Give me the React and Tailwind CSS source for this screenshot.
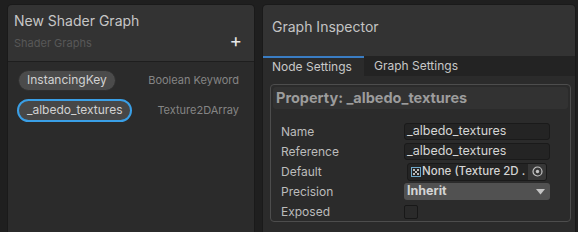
import React from 'react';

const font = { fontFamily: 'Inter, "Noto Sans", sans-serif' };

function Pill({ label, type, selected }) {
  return (
    <div className="flex items-center justify-between h-[24px] pr-[15px]">
      <div
        className={
          selected
            ? 'h-[23px] px-[8px] flex items-center rounded-full bg-[#474747] border-2 border-[#3a9fe6] text-[12px] text-[#d2d2d2]'
            : 'h-[21px] ml-[1px] px-[8px] flex items-center rounded-full bg-[#4b4b4b] border border-[#2f2f2f] text-[12px] text-[#d2d2d2]'
        }
      >
        {label}
      </div>
      <span className="text-[11px] text-[#858585]">{type}</span>
    </div>
  );
}

function Row({ label, children }) {
  return (
    <div className="flex items-center h-[20px]">
      <span className="w-[131px] pl-[8px] text-[12px] text-[#bcbcbc]">{label}</span>
      {children}
    </div>
  );
}

export default function App() {
  return (
    <div style={font} className="w-[578px] h-[232px] bg-[#1f1f1f] flex pt-[4px] pl-[7px] gap-[7px] overflow-hidden">
      {/* Left: blackboard */}
      <div className="w-[248px] flex flex-col rounded-t-[5px] overflow-hidden border-x border-t border-[#1a1a1a]">
        <div className="h-[57px] bg-[#333333] border-b border-[#1e1e1e] flex flex-col px-[6px] pt-[5px]">
          <span className="text-[14px] text-[#c6c6c6] leading-[22px]">New Shader Graph</span>
          <div className="flex items-center justify-between mt-[3px]">
            <span className="text-[11px] text-[#585858]">Shader Graphs</span>
            <span className="text-[19px] leading-none text-[#e6e6e6] mr-[6px] -mt-[5px]">+</span>
          </div>
        </div>
        <div className="flex-1 bg-[#2b2b2b] flex flex-col gap-[6px] pl-[9px] pt-[6px]">
          <Pill label="InstancingKey" type="Boolean Keyword" />
          <Pill label="_albedo_textures" type="Texture2DArray" selected />
        </div>
      </div>

      {/* Right: inspector */}
      <div className="w-[314px] flex flex-col rounded-t-[5px] overflow-hidden border-x border-t border-[#1a1a1a]">
        <div className="h-[51px] bg-[#333333] px-[9px] pt-[9px]">
          <span className="text-[14px] text-[#c4c4c4]">Graph Inspector</span>
        </div>
        <div className="h-[20px] bg-[#232323] flex text-[12px]">
          <div className="w-[101px] bg-[#2b2b2b] border-t-2 border-[#3a7dc4] flex items-center pl-[9px] text-[#c8c8c8]">
            Node Settings
          </div>
          <div className="flex items-center pl-[10px] text-[#c8c8c8]">Graph Settings</div>
        </div>
        <div className="flex-1 bg-[#2b2b2b] px-[7px] pt-[8px]">
          <div className="w-[301px] h-[138px] rounded-[4px] border border-[#4d4d4d] p-[2px] flex flex-col">
            <div className="h-[22px] bg-[#323232] rounded-[3px] flex items-center pl-[3px] text-[14.5px] font-bold text-[#9c9c9c]">
              Property: _albedo_textures
            </div>
            <div className="flex flex-col mt-[13px]">
              <Row label="Name">
                <div className="w-[146px] h-[17px] bg-[#242424] border border-[#1a1a1a] rounded-[3px] flex items-center pl-[2px] text-[12.5px] text-[#d4d4d4]">
                  _albedo_textures
                </div>
              </Row>
              <Row label="Reference">
                <div className="w-[146px] h-[17px] bg-[#242424] border border-[#1a1a1a] rounded-[3px] flex items-center pl-[2px] text-[12.5px] text-[#d4d4d4]">
                  _albedo_textures
                </div>
              </Row>
              <Row label="Default">
                <div className="ml-[3px] w-[140px] h-[18px] bg-[#242424] border border-[#1a1a1a] rounded-[3px] flex items-center">
                  <svg width="10" height="10" viewBox="0 0 10 10" className="ml-[3px] mr-[1px] shrink-0">
                    <rect x="0.5" y="0.5" width="9" height="9" fill="none" stroke="#6fa8c9" />
                    <rect x="2" y="2" width="2" height="2" fill="#bbb" />
                    <rect x="6" y="2" width="2" height="2" fill="#bbb" />
                    <rect x="4" y="4" width="2" height="2" fill="#bbb" />
                    <rect x="2" y="6" width="2" height="2" fill="#bbb" />
                    <rect x="6" y="6" width="2" height="2" fill="#bbb" />
                  </svg>
                  <span className="flex-1 min-w-0 whitespace-nowrap text-[11.5px] font-medium text-[#d4d4d4]">None (Texture 2D .</span>
                  <div className="w-[18px] h-[16px] shrink-0 bg-[#373737] flex items-center justify-center rounded-r-[2px]">
                    <svg width="11" height="11" viewBox="0 0 11 11">
                      <circle cx="5.5" cy="5.5" r="4.5" fill="none" stroke="#c4c4c4" strokeWidth="1.2" />
                      <circle cx="5.5" cy="5.5" r="1.7" fill="#c4c4c4" />
                    </svg>
                  </div>
                </div>
              </Row>
              <Row label="Precision">
                <div className="w-[146px] h-[17px] bg-[#515151] rounded-[3px] flex items-center justify-between pl-[3px] pr-[5px] text-[12.5px] font-bold text-[#d4d4d4]">
                  Inherit
                  <svg width="9" height="6" viewBox="0 0 9 6">
                    <path d="M0 0 H9 L4.5 5.5 Z" fill="#c4c4c4" />
                  </svg>
                </div>
              </Row>
              <Row label="Exposed">
                <div className="w-[14px] h-[14px] bg-[#2a2a2a] border border-[#181818] rounded-[2px]" />
              </Row>
            </div>
          </div>
        </div>
      </div>
    </div>
  );
}
